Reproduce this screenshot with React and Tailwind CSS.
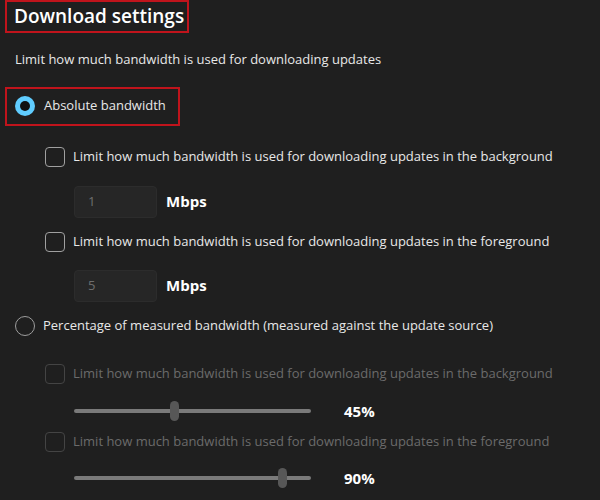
import React from 'react';

function Radio({ checked }) {
  return checked ? (
    <span className="flex h-5 w-5 items-center justify-center rounded-full bg-[#60cdff]">
      <span className="h-[10px] w-[10px] rounded-full bg-[#111]" />
    </span>
  ) : (
    <span className="h-5 w-5 rounded-full border border-[#9d9d9d]" />
  );
}

function Check({ disabled, label }) {
  return (
    <div className="flex h-5 items-center">
      <span className={"h-5 w-5 rounded-[4px] border " + (disabled ? "border-[#444]" : "border-[#a0a0a0]")} />
      <span className={"ml-2 " + (disabled ? "text-[#6b6b6b]" : "text-[#e8e8e8]")}>{label}</span>
    </div>
  );
}

function Amount({ value }) {
  return (
    <div className="ml-[29px] flex items-center">
      <div className="flex h-8 w-[83px] items-center rounded-[4px] border border-[#2c2c2c] bg-[#262626] pl-[13px] text-[#6e6e6e]">{value}</div>
      <span className="ml-[9px] text-[15px] font-bold text-white">Mbps</span>
    </div>
  );
}

function Slider({ pct, thumb }) {
  return (
    <div className="ml-[29px] flex items-center">
      <div className="relative h-5 w-[237px]">
        <div className="absolute left-0 right-0 top-[8px] h-[4px] rounded-full bg-[#7a7a7a]" />
        <div className="absolute top-0 h-5 w-[9px] rounded-full bg-[#575757]" style={{ left: thumb }} />
      </div>
      <span className="ml-[33px] text-[15px] font-bold text-white">{pct}</span>
    </div>
  );
}

export default function App() {
  const bg = "Limit how much bandwidth is used for downloading updates in the background";
  const fg = "Limit how much bandwidth is used for downloading updates in the foreground";
  return (
    <div className="h-[500px] w-[600px] overflow-hidden bg-[#1f1f1f] text-[13px] text-[#e8e8e8]" style={{ fontFamily: '"Open Sans", sans-serif' }}>
      <div className="ml-[5px] inline-flex h-[33px] items-center border-2 border-[#c0141c] pl-[7px] pr-[3px]">
        <h1 className="text-[19px] font-semibold text-white">Download settings</h1>
      </div>
      <p className="ml-[15px] mt-[17px]">Limit how much bandwidth is used for downloading updates</p>
      <div className="ml-[5px] mt-[17px] flex h-[39px] w-[175px] items-center border-2 border-[#c0141c] pl-[8px]">
        <Radio checked />
        <span className="ml-[9px]">Absolute bandwidth</span>
      </div>
      <div className="ml-[45px] mt-[21px] flex flex-col">
        <Check label={bg} />
        <div className="mt-[19px]"><Amount value="1" /></div>
        <div className="mt-[14px]"><Check label={fg} /></div>
        <div className="mt-[18px]"><Amount value="5" /></div>
      </div>
      <div className="ml-[15px] mt-[14px] flex items-center">
        <Radio />
        <span className="ml-[8px]">Percentage of measured bandwidth (measured against the update source)</span>
      </div>
      <div className="ml-[45px] mt-[28px] flex flex-col">
        <Check disabled label={bg} />
        <div className="mt-[16px]"><Slider pct="45%" thumb={96} /></div>
        <div className="mt-[10px]"><Check disabled label={fg} /></div>
        <div className="mt-[15px]"><Slider pct="90%" thumb={204} /></div>
      </div>
    </div>
  );
}
